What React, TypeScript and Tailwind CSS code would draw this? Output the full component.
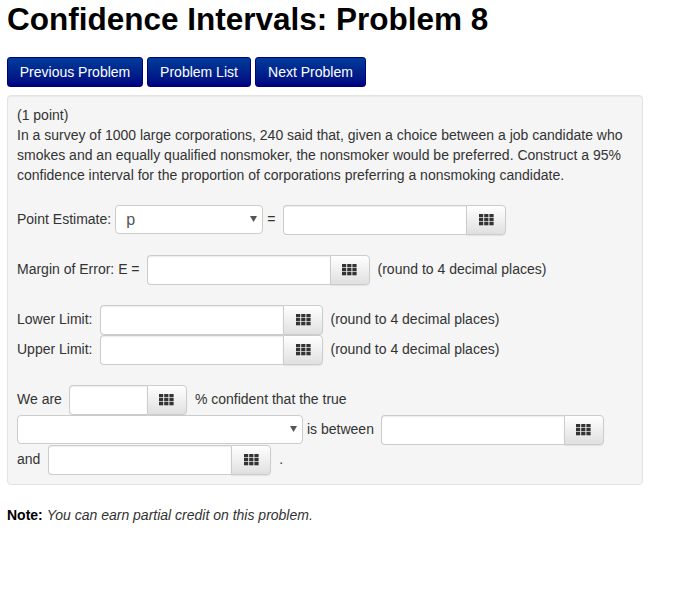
function GridIcon() {
  const xs = [0, 5.2, 10.4]
  const ys = [0, 4, 8]
  return (
    <svg width="15" height="12" viewBox="0 0 15 12" className="block">
      {ys.map((y) =>
        xs.map((x) => <rect key={`${x}-${y}`} x={x} y={y} width="4.2" height="3.3" fill="#333333" />)
      )}
    </svg>
  )
}

function MathInput({ width }: { width: string }) {
  return (
    <div className={`flex h-[30px] shrink-0 ${width}`}>
      <div className="flex-1 rounded-l-[4px] border border-r-0 border-[#cccccc] bg-white shadow-[inset_0_1px_1px_rgba(0,0,0,0.075)]" />
      <div className="flex w-[40px] items-center justify-center rounded-r-[4px] border border-[#cccccc] bg-gradient-to-b from-white to-[#e0e0e0] shadow-[0_1px_1px_rgba(0,0,0,0.08)]">
        <GridIcon />
      </div>
    </div>
  )
}

function Select({ width, value }: { width: string; value?: string }) {
  return (
    <div className={`relative flex h-[29px] shrink-0 items-center self-start rounded-[4px] border border-[#cccccc] bg-white pl-[10px] text-[#555555] ${width}`}>
      <span className="text-[16px]">{value}</span>
      <svg width="7" height="6" viewBox="0 0 7 6" className="absolute right-[5px] top-[10px]">
        <path d="M0 0H7L3.5 6Z" fill="#555555" />
      </svg>
    </div>
  )
}

function Row({ children, className = "" }: { children: React.ReactNode; className?: string }) {
  return <div className={`flex h-[30px] items-center [&>span]:mb-[2px] ${className}`}>{children}</div>
}

export default function App() {
  const navButton = "flex h-[30px] items-center justify-center rounded-[3px] border border-[#00007a] bg-gradient-to-b from-[#003a9a] to-[#000080] text-[14px] text-white"

  return (
    <div className="min-h-[589px] bg-white px-[7px] font-['Liberation_Sans',Arial,sans-serif] text-[14px] leading-[20px] text-[#333333]">
      <h1 className="pt-[1px] text-[31.5px] font-bold leading-[36px] text-black">Confidence Intervals: Problem 8</h1>

      <div className="mt-[20px] flex gap-[4px]">
        <a className={`${navButton} w-[136px]`}>Previous Problem</a>
        <a className={`${navButton} w-[104px]`}>Problem List</a>
        <a className={`${navButton} w-[111px]`}>Next Problem</a>
      </div>

      <div className="mt-[8px] h-[390px] w-[636px] rounded-[4px] border border-[#e3e3e3] bg-[#f5f5f5] py-[9px] pl-[9px] pr-[18px] shadow-[inset_0_1px_1px_rgba(0,0,0,0.05)]">
        <p>(1 point)</p>
        <p>
          In a survey of 1000 large corporations, 240 said that, given a choice between a job candidate who smokes and an equally qualified nonsmoker, the nonsmoker would be preferred. Construct a 95% confidence interval for the proportion of corporations preferring a nonsmoking candidate.
        </p>

        <Row className="mt-[20px]">
          <span className="mr-[4px]">Point Estimate:</span>
          <Select width="w-[148px]" value="p" />
          <span className="ml-[4px] mr-[8px]">=</span>
          <MathInput width="w-[223px]" />
        </Row>

        <Row className="mt-[20px]">
          <span className="mr-[7px]">Margin of Error: E =</span>
          <MathInput width="w-[223px]" />
          <span className="ml-[8px]">(round to 4 decimal places)</span>
        </Row>

        <Row className="mt-[20px]">
          <span className="mr-[8px]">Lower Limit:</span>
          <MathInput width="w-[223px]" />
          <span className="ml-[7px]">(round to 4 decimal places)</span>
        </Row>
        <Row>
          <span className="mr-[8px]">Upper Limit:</span>
          <MathInput width="w-[223px]" />
          <span className="ml-[7px]">(round to 4 decimal places)</span>
        </Row>

        <Row className="mt-[20px]">
          <span className="mr-[7px]">We are</span>
          <MathInput width="w-[118px]" />
          <span className="ml-[8px]">% confident that the true</span>
        </Row>
        <Row>
          <Select width="w-[286px]" />
          <span className="ml-[4px] mr-[7px]">is between</span>
          <MathInput width="w-[223px]" />
        </Row>
        <Row>
          <span className="mr-[8px]">and</span>
          <MathInput width="w-[223px]" />
          <span className="ml-[8px]">.</span>
        </Row>
      </div>

      <p className="mt-[20px] text-[14px] text-[#333333]">
        <b className="text-black">Note:</b> <i>You can earn partial credit on this problem.</i>
      </p>
    </div>
  )
}
